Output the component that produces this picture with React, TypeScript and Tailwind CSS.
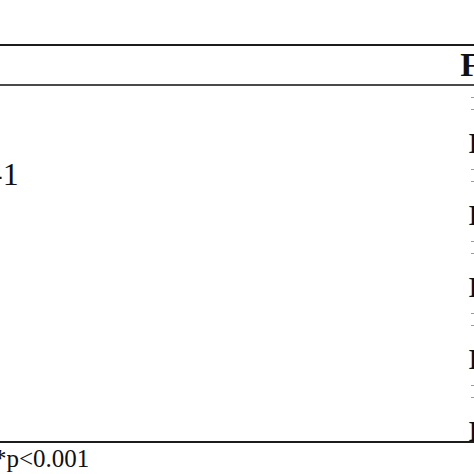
const groups = [0, 1, 2, 3, 4];

function Mark() {
  return <div className="h-px w-[3px] bg-[#9a9a9a]" />;
}

function RowGroup() {
  return (
    <div className="flex h-[72px] flex-col items-end">
      <div className="h-[12px]" />
      <Mark />
      <div className="h-[11px]" />
      <Mark />
      <div className="h-[19px]" />
      <div className="-mr-[6px] h-[30px] text-[30px] font-bold leading-none text-[#111]">I</div>
    </div>
  );
}

export default function App() {
  return (
    <div
      className="h-[474px] w-[474px] overflow-hidden bg-white text-black"
      style={{ fontFamily: '"Liberation Serif", "Times New Roman", serif' }}
    >
      <div className="h-[44px]" />
      <div className="border-t-[2px] border-[#1c1c1c]">
        <div className="flex h-[38px] items-center justify-end overflow-hidden">
          <span className="-mr-[7px] shrink-0 text-[34px] font-bold leading-none text-[#111]">F</span>
        </div>
      </div>
      <div className="flex h-[357px] justify-between overflow-hidden border-t-[2px] border-[#4a4a4a]">
        <div className="flex flex-col">
          <div className="h-[72px]" />
          <div className="-ml-[8px] text-[32px] leading-none text-[#111]">-1</div>
        </div>
        <div className="flex flex-col items-end">
          {groups.map((group) => (
            <RowGroup key={group} />
          ))}
        </div>
      </div>
      <div className="border-t-[2px] border-[#1c1c1c]">
        <p className="-ml-[6px] pt-[3px] text-[25px] leading-none text-[#111]">*p&lt;0.001</p>
      </div>
    </div>
  );
}
